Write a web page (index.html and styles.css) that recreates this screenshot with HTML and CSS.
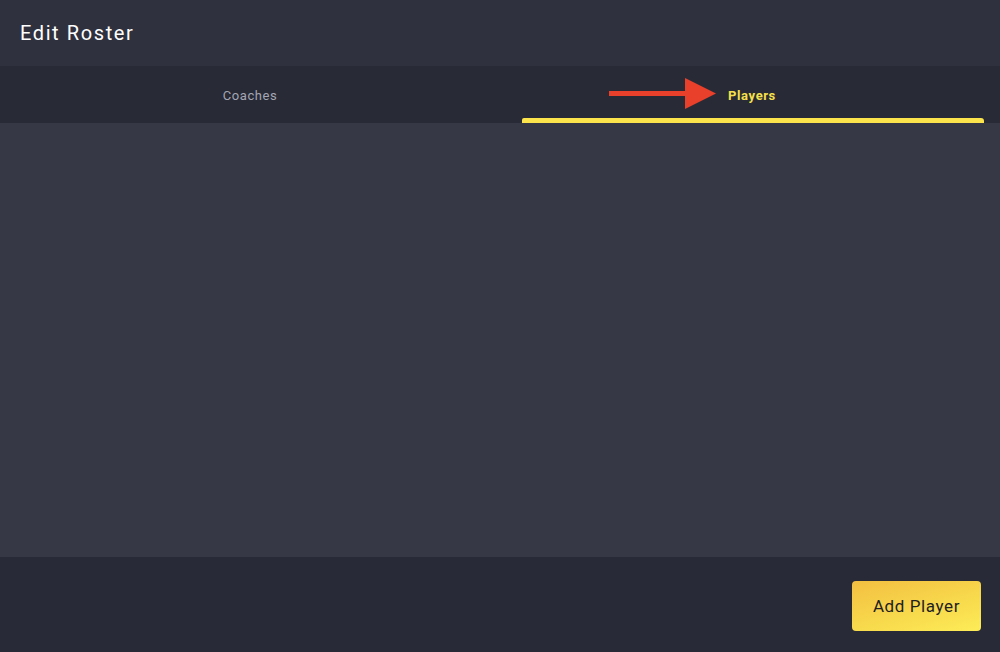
FILE: index.html
```html
<!DOCTYPE html>
<html lang="en">
<head>
  <meta charset="UTF-8">
  <meta name="viewport" content="width=device-width, initial-scale=1.0">
  <title>Edit Roster</title>
  <link rel="stylesheet" href="styles.css">
</head>
<body>
  <div class="page">
    <header class="header">
      <h1>Edit Roster</h1>
    </header>

    <!-- Tabs -->
    <nav class="tabs">
      <div class="tab">Coaches</div>
      <div class="tab active">
        <svg class="arrow" width="108" height="32" viewBox="0 0 108 32">
          <rect x="0" y="13" width="78" height="5" fill="#e8402a"/>
          <polygon points="76,0 107,15.5 76,31" fill="#e8402a"/>
        </svg>
        <span class="label">Players</span>
      </div>
    </nav>

    <main class="content"></main>

    <footer class="footer">
      <button class="add-btn">Add Player</button>
    </footer>
  </div>
</body>
</html>
```

FILE: styles.css
```css
body {
  margin: 0;
  font-family: Roboto, "Noto Sans", sans-serif;
  background-color: #282a37;
}
.page {
  display: flex;
  flex-direction: column;
  height: 652px;
}
.header {
  height: 66px;
  background-color: #30313e;
  display: flex;
  align-items: center;
  padding-left: 20px;
}
.header h1 {
  margin: 0;
  font-size: 20px;
  font-weight: 400;
  letter-spacing: 1.6px;
  color: #ffffff;
}
.tabs {
  height: 57px;
  display: flex;
  background-color: #282a36;
}
.tab {
  flex: 1;
  position: relative;
  display: flex;
  align-items: center;
  justify-content: center;
  font-size: 13px;
  letter-spacing: 0.6px;
  color: #a4a6b3;
  padding-top: 2px;
}
.tab.active {
  color: #f6e04a;
  font-weight: 700;
}
.tab.active .label {
  margin-left: 4px;
}
.tab.active::after {
  content: "";
  position: absolute;
  left: 22px;
  right: 16px;
  bottom: 0;
  height: 5px;
  background-color: #fbe44c;
  border-radius: 2px 3px 0 0;
}
.arrow {
  position: absolute;
  left: 109px;
  top: 12px;
}
.content {
  flex: 1;
  background-color: #363846;
}
.footer {
  height: 95px;
  display: flex;
  align-items: center;
  justify-content: flex-end;
  padding-right: 19px;
  background-color: #282a37;
}
.add-btn {
  width: 129px;
  height: 50px;
  margin-top: 2px;
  border: none;
  border-radius: 4px;
  background: linear-gradient(165deg, #f3bf41 0%, #f7d64b 50%, #fdec57 100%);
  color: #1e1e24;
  font-family: Roboto, "Noto Sans", sans-serif;
  font-size: 17px;
  font-weight: 400;
  letter-spacing: 0.6px;
  cursor: pointer;
}
```
